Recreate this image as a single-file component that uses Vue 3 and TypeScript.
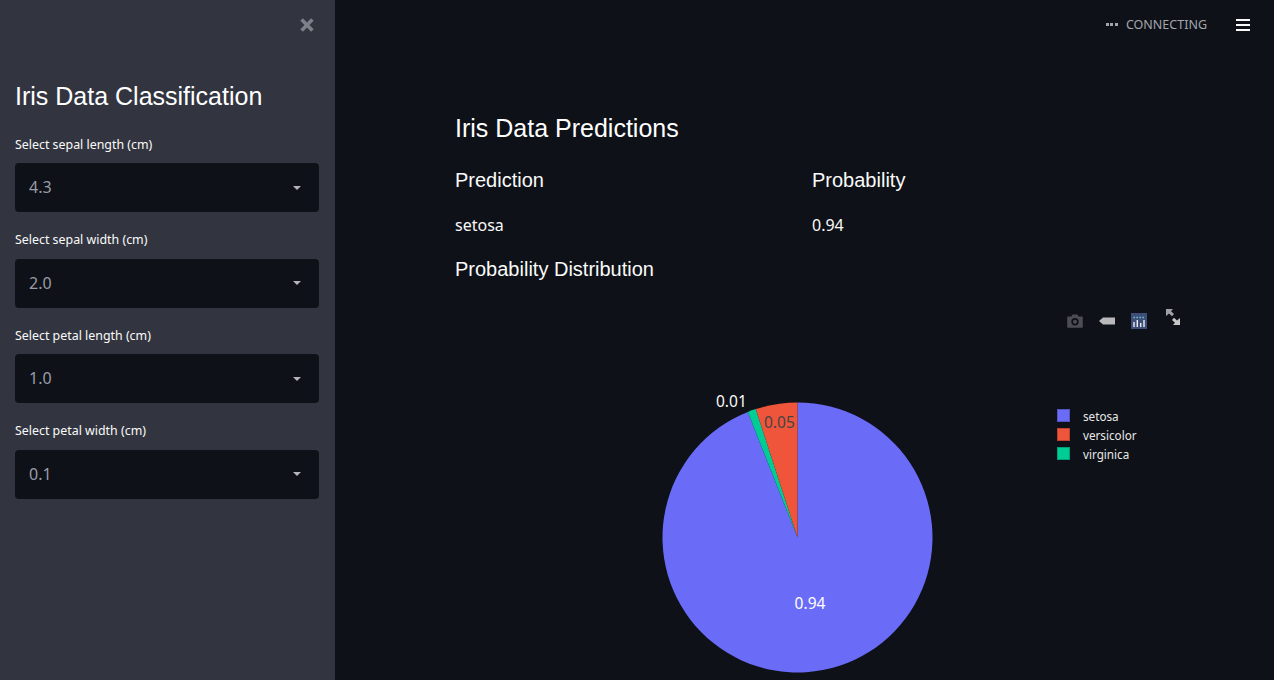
<script setup lang="ts">
const selects = [
  { label: 'Select sepal length (cm)', value: '4.3' },
  { label: 'Select sepal width (cm)', value: '2.0' },
  { label: 'Select petal length (cm)', value: '1.0' },
  { label: 'Select petal width (cm)', value: '0.1' },
]
const legend = [
  { name: 'setosa', color: '#6a6cf8' },
  { name: 'versicolor', color: '#ef553b' },
  { name: 'virginica', color: '#00cc96' },
]
const cx = 135.5
const cy = 135.5
const r = 135
function pt(frac: number): string {
  const a = frac * 2 * Math.PI
  return `${(cx + r * Math.sin(a)).toFixed(2)} ${(cy - r * Math.cos(a)).toFixed(2)}`
}
function slice(from: number, to: number): string {
  const large = to - from > 0.5 ? 1 : 0
  return `M${cx} ${cy}L${pt(from)}A${r} ${r} 0 ${large} 1 ${pt(to)}Z`
}
const setosa = slice(0, 0.94)
const virginica = slice(0.94, 0.95)
const versicolor = slice(0.95, 1)
</script>

<template>
  <div class="app">
    <aside class="sidebar">
      <div class="close-row">
        <svg class="close" width="14" height="14" viewBox="0 0 14 14">
          <path d="M1.600 1.600l10.800 10.800M12.400 1.600L1.600 12.400" stroke="#7d8088" stroke-width="3.600" />
        </svg>
      </div>
      <h1 class="side-title">Iris Data Classification</h1>
      <div v-for="s in selects" :key="s.label" class="field">
        <label class="field-label">{{ s.label }}</label>
        <div class="select">
          <span class="select-value">{{ s.value }}</span>
          <span class="caret"></span>
        </div>
      </div>
    </aside>

    <main class="main">
      <header class="topbar">
        <span class="dots"><i></i><i></i><i></i></span>
        <span class="status">CONNECTING</span>
        <span class="burger"><i></i><i></i><i></i></span>
      </header>

      <div class="content">
        <h2 class="title">Iris Data Predictions</h2>
        <div class="columns">
          <div class="column">
            <h3 class="sub">Prediction</h3>
            <p class="val">setosa</p>
          </div>
          <div class="column">
            <h3 class="sub">Probability</h3>
            <p class="val">0.94</p>
          </div>
        </div>
        <h3 class="sub dist">Probability Distribution</h3>

        <div class="chart">
          <div class="modebar">
            <svg width="16" height="14" viewBox="0 0 16 14">
              <path fill="#4b4d53" fill-rule="evenodd" d="M1 2.500h3.500L5.500.6h5l1 1.900H15a.8.8 0 0 1 .8.8v9.600a.8.8 0 0 1-.8.8H1a.8.8 0 0 1-.8-.8V3.300a.8.8 0 0 1 .8-.8zM8 4a3.700 3.700 0 1 0 0 7.400A3.700 3.700 0 0 0 8 4zm0 1.700a2 2 0 1 1 0 4 2 2 0 0 1 0-4z" />
            </svg>
            <svg width="16" height="8" viewBox="0 0 16 8">
              <path fill="#b9b9bb" d="M0 4L4 .5h12v7H4z" />
            </svg>
            <svg width="16" height="16" viewBox="0 0 16 16">
              <rect width="16" height="16" fill="#3d4f78" />
              <path stroke="#7fd0d2" stroke-width="1.500" d="M2.500 4.500h1.300M5.500 4.500h1.300M8.500 4.500h1.300M11.500 4.500h1.300" />
              <path stroke="#eceef2" stroke-width="1.400" d="M3 9v5M6.300 7v7M9.700 10v4M13 7v7" />
            </svg>
            <svg class="expand" width="14" height="16" viewBox="0 0 14 16">
              <path fill="#a2a2a5" d="M0 0h7L5 2.200l3 2.800-2 2.200-3-2.700L0 7z" />
              <path fill="#c8c8ca" d="M14 16H7l2-2.200-3-2.800 2-2.200 3 2.700L14 9z" />
            </svg>
          </div>

          <div class="plot">
            <div class="pie-wrap">
              <span class="outside-label">0.01</span>
              <svg class="pie" width="271" height="271" viewBox="0 0 271 271">
                <path :d="setosa" fill="#6a6cf8" />
                <path :d="virginica" fill="#00cc96" />
                <path :d="versicolor" fill="#ef553b" />
                <text x="102" y="26" class="pie-text dark">0.05</text>
                <text x="148" y="207" class="pie-text light" text-anchor="middle">0.94</text>
              </svg>
            </div>
            <ul class="legend">
              <li v-for="l in legend" :key="l.name" class="legend-item">
                <span class="swatch" :style="{ background: l.color }"></span>
                <span>{{ l.name }}</span>
              </li>
            </ul>
          </div>
        </div>
      </div>
    </main>
  </div>
</template>

<style>
html, body { margin: 0; padding: 0; background: #0e1117; overflow: hidden; }
</style>

<style scoped>
.app {
  display: flex;
  width: 1274px;
  height: 680px;
  overflow: hidden;
  background: #0e1117;
  color: #fafafa;
  font-family: "Noto Sans", "Open Sans", sans-serif;
}
.sidebar {
  width: 335px;
  flex: none;
  box-sizing: border-box;
  padding: 0 16px 0 15px;
  background: #32353f;
}
.close-row {
  display: flex;
  justify-content: flex-end;
  padding: 18px 5px 0 0;
  height: 14px;
}
.close { display: block; }
.side-title {
  margin: 49px 0 0;
  font: 400 25px/30px "Liberation Sans", Arial, sans-serif;
  color: #fff;
  height: 30px;
}
.field { margin-top: 24.750px; }
.field + .field { margin-top: 19.250px; }
.field-label {
  display: block;
  font-size: 12.400px;
  line-height: 18px;
  color: #fafafa;
  margin-bottom: 9.250px;
}
.select {
  display: flex;
  align-items: center;
  justify-content: space-between;
  height: 49px;
  box-sizing: border-box;
  padding: 0 18px 0 14px;
  border-radius: 4px;
  background: #0e1117;
}
.select-value { font-size: 16px; color: #9a9ca6; margin-bottom: 0.600px; }
.caret {
  width: 0;
  height: 0;
  border-left: 4px solid transparent;
  border-right: 4px solid transparent;
  border-top: 4px solid #b4b5ba;
}
.main {
  flex: 1;
  min-width: 0;
  display: flex;
  flex-direction: column;
}
.topbar {
  display: flex;
  align-items: center;
  justify-content: flex-end;
  height: 49px;
  padding-right: 24px;
  box-sizing: border-box;
}
.dots { display: flex; gap: 1.500px; margin-right: 8px; }
.dots i { width: 3px; height: 3px; background: #a3a5ad; display: block; }
.status { font-size: 12.500px; color: #a3a5ad; margin-right: 29px; }
.burger { display: flex; flex-direction: column; gap: 3px; width: 14px; }
.burger i { display: block; height: 2px; background: #fafafa; }
.content { padding: 64px 90px 0 120px; }
.title {
  margin: 0;
  font: 400 25px/30px "Liberation Sans", Arial, sans-serif;
  color: #fff;
}
.columns {
  display: grid;
  grid-template-columns: 357px 1fr;
  margin-top: 25px;
}
.sub {
  margin: 0;
  font: 400 20px/24px "Liberation Sans", Arial, sans-serif;
  color: #fafafa;
}
.val {
  margin: 22px 0 0;
  font-size: 16px;
  line-height: 22px;
  color: #fafafa;
}
.dist { margin-top: 21px; }
.chart { display: flex; flex-direction: column; }
.modebar {
  display: flex;
  align-items: center;
  justify-content: flex-end;
  gap: 16px;
  margin-top: 32px;
  padding-right: 4px;
  height: 16px;
}
.expand { position: relative; top: -4px; margin-left: 3px; }
.plot {
  display: flex;
  align-items: flex-start;
  margin-top: 73px;
  padding-left: 207px;
}
.pie-wrap { position: relative; flex: none; width: 271px; height: 271px; }
.pie { display: block; }
.outside-label {
  position: absolute;
  left: 54px;
  top: -11px;
  font-size: 15.500px;
  line-height: 20px;
  color: #fafafa;
}
.pie-text { font-size: 15.500px; font-family: "Noto Sans", "Open Sans", sans-serif; }
.dark { fill: #444; }
.light { fill: #fff; }
.legend {
  list-style: none;
  margin: 4px 0 0 124px;
  padding: 0;
}
.legend-item {
  display: flex;
  align-items: center;
  height: 19px;
  font-size: 11.700px;
  color: #e8e8e8;
}
.swatch {
  width: 13px;
  height: 13px;
  margin-right: 13px;
  box-sizing: border-box;
  border: 1px solid rgba(0, 0, 0, 0.22);
}
</style>
